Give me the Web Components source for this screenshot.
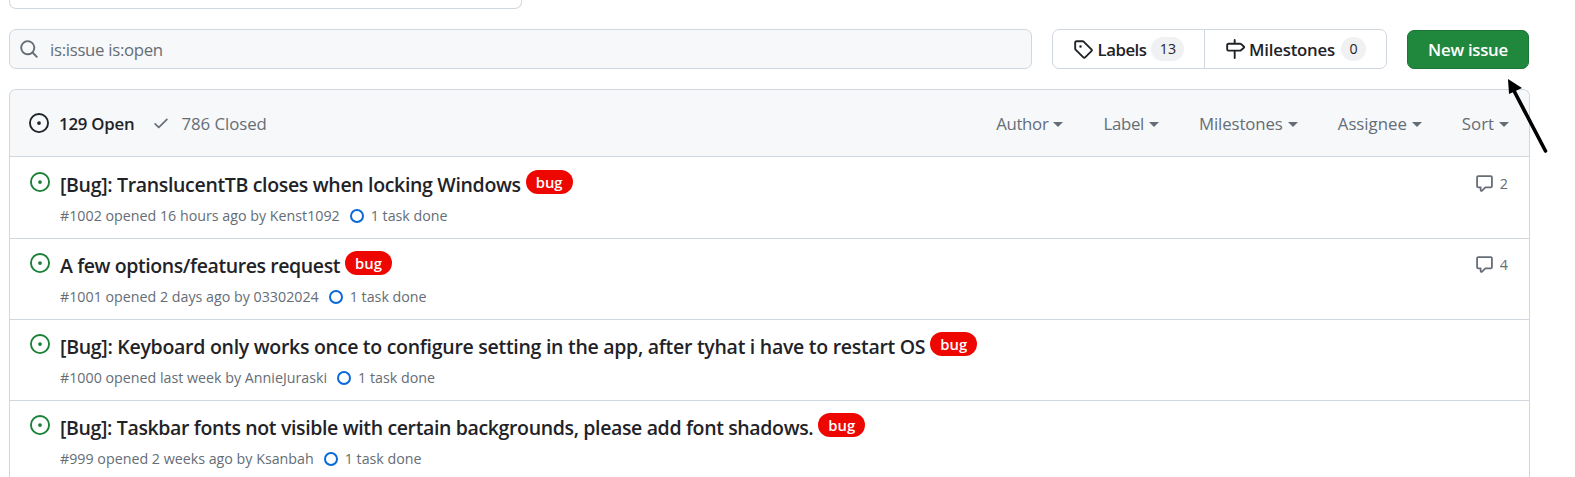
<!doctype html>
<html><head><meta charset="utf-8">
<style>
html,body{margin:0;padding:0;background:#fff;height:477px;overflow:hidden}
body{font-family:"Open Sans","Noto Sans",sans-serif;color:#1f2328}
</style></head>
<body>
<issues-page>
  <top-stub></top-stub>
  <issues-toolbar>
    <search-box>is:issue is:open</search-box>
    <nav-links></nav-links>
    <new-button>New issue</new-button>
  </issues-toolbar>
  <issues-panel>
    <panel-header></panel-header>
    <issue-row ls="-.33" title-text="[Bug]: TranslucentTB closes when locking Windows" meta="#1002 opened 16 hours ago by Kenst1092" comments="2"></issue-row>
    <issue-row ls="-.41" title-text="A few options/features request" meta="#1001 opened 2 days ago by 03302024" comments="4"></issue-row>
    <issue-row ls="-.28" title-text="[Bug]: Keyboard only works once to configure setting in the app, after tyhat i have to restart OS" meta="#1000 opened last week by AnnieJuraski"></issue-row>
    <issue-row ls="-.36" title-text="[Bug]: Taskbar fonts not visible with certain backgrounds, please add font shadows." meta="#999 opened 2 weeks ago by Ksanbah"></issue-row>
  </issues-panel>
  <arrow-mark></arrow-mark>
</issues-page>
<script>
function def(name, html){
  customElements.define(name, class extends HTMLElement{
    connectedCallback(){
      if(this.shadowRoot) return;
      const r=this.attachShadow({mode:'open'});
      r.innerHTML=typeof html==='function'?html(this):html;
    }
  });
}
const ICON={
 open:(s,c)=>`<svg width="${s}" height="${s}" viewBox="0 0 16 16" fill="${c}" style="display:block;flex:none"><path d="M8 9.5a1.5 1.5 0 1 0 0-3 1.5 1.5 0 0 0 0 3Z"/><path d="M8 0a8 8 0 1 1 0 16A8 8 0 0 1 8 0ZM1.5 8a6.5 6.5 0 1 0 13 0 6.5 6.5 0 0 0-13 0Z"/></svg>`,
 check:(s,c)=>`<svg width="${s}" height="${s}" viewBox="0 0 16 16" fill="${c}" style="display:block;flex:none"><path d="M13.78 4.22a.75.75 0 0 1 0 1.06l-7.25 7.25a.75.75 0 0 1-1.06 0L2.22 9.28a.751.751 0 0 1 1.06-1.06L6 10.94l6.72-6.72a.75.75 0 0 1 1.06 0Z"/></svg>`,
 search:(s,c)=>`<svg width="${s}" height="${s}" viewBox="0 0 16 16" fill="${c}" style="display:block;flex:none"><path d="M10.68 11.74a6 6 0 0 1-7.922-8.982 6 6 0 0 1 8.982 7.922l3.04 3.04a.749.749 0 1 1-1.06 1.06ZM11.5 7a4.499 4.499 0 1 0-8.997 0A4.499 4.499 0 0 0 11.5 7Z"/></svg>`,
 tag:(s,c)=>`<svg width="${s}" height="${s}" viewBox="0 0 16 16" fill="${c}" style="display:block;flex:none"><path d="M1 7.775V2.75C1 1.784 1.784 1 2.75 1h5.025c.464 0 .91.184 1.238.513l6.25 6.25a1.75 1.75 0 0 1 0 2.474l-5.026 5.026a1.75 1.75 0 0 1-2.474 0l-6.25-6.25A1.752 1.752 0 0 1 1 7.775Zm1.5 0c0 .066.026.13.073.177l6.25 6.25a.25.25 0 0 0 .354 0l5.025-5.025a.25.25 0 0 0 0-.354l-6.25-6.25a.25.25 0 0 0-.177-.073H2.75a.25.25 0 0 0-.25.25ZM6 5a1 1 0 1 1 0 2 1 1 0 0 1 0-2Z"/></svg>`,
 milestone:(s,c)=>`<svg width="${s}" height="${s}" viewBox="0 0 16 16" fill="${c}" style="display:block;flex:none"><path d="M7.75 0a.75.75 0 0 1 .75.75V3h3.634c.414 0 .814.147 1.13.414l2.07 1.75a1.75 1.75 0 0 1 0 2.672l-2.07 1.75a1.75 1.75 0 0 1-1.13.414H8.5v5.25a.75.75 0 0 1-1.5 0V10H2.75A1.75 1.75 0 0 1 1 8.25v-3.5C1 3.784 1.784 3 2.75 3H7V.75A.75.75 0 0 1 7.75 0Zm4.384 8.5a.25.25 0 0 0 .161-.06l2.07-1.75a.248.248 0 0 0 0-.38l-2.07-1.75a.25.25 0 0 0-.161-.06H2.75a.25.25 0 0 0-.25.25v3.5c0 .138.112.25.25.25h9.384Z"/></svg>`,
 comment:(s,c)=>`<svg width="${s}" height="${s}" viewBox="0 0 16 16" fill="${c}" style="display:block;flex:none"><path d="M1 2.75C1 1.784 1.784 1 2.75 1h10.5c.966 0 1.75.784 1.75 1.75v7.5A1.75 1.75 0 0 1 13.25 12H9.06l-2.573 2.573A1.458 1.458 0 0 1 4 13.543V12H2.75A1.75 1.75 0 0 1 1 10.25Zm1.75-.25a.25.25 0 0 0-.25.25v7.5c0 .138.112.25.25.25h2a.75.75 0 0 1 .75.75v2.19l2.72-2.72a.749.749 0 0 1 .53-.22h4.5a.25.25 0 0 0 .25-.25v-7.5a.25.25 0 0 0-.25-.25Z"/></svg>`
};
const BORDER='#d0d7de', MUTED='#656d76';

def('issues-page',`<style>:host{display:block;height:477px;position:relative;overflow:hidden}</style><slot></slot>`);
def('top-stub',`<style>:host{display:block;box-sizing:border-box;width:513px;height:9px;margin-left:9px;border:1px solid ${BORDER};border-top:0;border-radius:0 0 7px 7px}</style>`);
def('issues-toolbar',`<style>:host{display:flex;align-items:flex-start;height:40px;margin:20px 46px 0 9px}</style><slot></slot>`);
def('search-box',`<style>:host{display:flex;align-items:center;box-sizing:border-box;width:1023px;height:40px;background:#f6f8fa;border:1px solid ${BORDER};border-radius:7px;padding-left:9px;color:${MUTED};font-size:16.8px;letter-spacing:-.3px}
span{margin-left:11px}</style>${ICON.search(20,MUTED)}<span><slot></slot></span>`);
def('nav-links',`<style>:host{display:flex;box-sizing:border-box;width:335px;height:40px;margin-left:20px;border:1px solid ${BORDER};border-radius:7px;font-size:16.8px;font-weight:600}
a{display:flex;align-items:center;justify-content:center;color:#1f2328}
a.l{width:151px;border-right:1px solid ${BORDER};gap:5px;letter-spacing:-.5px}a.m{flex:1;gap:4px;letter-spacing:-.2px}
b{font-weight:400;font-size:14.2px;background:#eff1f3;border-radius:12px;height:24px;line-height:24px;text-align:center;letter-spacing:0}
.l b{width:33px}.m b{width:25px;margin-left:2px}</style>
<a class="l">${ICON.tag(20,'#1f2328')}<span>Labels</span><b>13</b></a><a class="m">${ICON.milestone(20,'#1f2328')}<span>Milestones</span><b>0</b></a>`);
def('new-button',`<style>:host{display:flex;align-items:center;justify-content:center;box-sizing:border-box;width:122px;height:39px;margin-top:1px;margin-left:20px;background:#1f883d;border:1px solid #1b7535;border-radius:7px;color:#fff;font-size:16.8px;font-weight:600;letter-spacing:-.27px}</style><slot></slot>`);
def('issues-panel',`<style>:host{display:block;box-sizing:border-box;width:1521px;margin:20px 0 0 9px;border:1px solid ${BORDER};border-bottom:0;border-radius:7px 7px 0 0}</style><slot></slot>`);
const dd=([t,ls])=>`<span class="d"><span style="letter-spacing:${ls}px">${t}</span><i></i></span>`;
def('panel-header',`<style>:host{display:flex;align-items:center;box-sizing:border-box;height:67px;margin-bottom:.67px;background:#f6f8fa;border-bottom:1px solid ${BORDER};border-radius:7px 7px 0 0;padding:0 20px 0 19px;font-size:16.8px;color:${MUTED}}
.o{display:flex;align-items:center;gap:10px;font-weight:600;color:#1f2328;letter-spacing:-.2px}
.c{display:flex;align-items:center;gap:12px;margin-left:17px;letter-spacing:-.05px}
.r{margin-left:auto;display:flex;gap:40px}
.d{display:flex;align-items:center}
i{display:block;width:0;height:0;margin-left:5px;margin-top:2px;border:5.5px solid transparent;border-bottom:0;border-top-color:${MUTED}}
</style><span class="o">${ICON.open(20,'#1f2328')}<span>129 Open</span></span><span class="c">${ICON.check(18,MUTED)}<span>786 Closed</span></span>
<span class="r">${[['Author',-.3],['Label',-.3],['Milestones',-.1],['Assignee',0],['Sort',0]].map(dd).join('')}</span>`);
def('issue-row',h=>{
 const t=h.getAttribute('title-text'),m=h.getAttribute('meta'),c=h.getAttribute('comments'),ls=h.getAttribute('ls');
 return `<style>:host{display:flex;box-sizing:border-box;height:81px;border-bottom:1px solid ${BORDER};padding:14.4px 21px 0 20px}
.b{margin-left:10px;flex:1}
.t{display:flex;align-items:flex-start;height:28px;font-size:19.5px;font-weight:600;color:#1f2328;letter-spacing:${ls}px;line-height:26px}
.bug{display:inline-block;background:#ee0701;color:#fff;font-size:14.8px;font-weight:600;line-height:24px;height:24px;padding:0 10px;border-radius:12px;margin-left:5px;margin-top:-2px;letter-spacing:0}
.m{display:flex;align-items:center;margin-top:6px;font-size:14.25px;color:${MUTED};line-height:20px}
.p{box-sizing:border-box;width:14px;height:14px;border:2.5px solid #0969da;border-radius:50%;margin:0 7px 0 10px}
.cm{display:flex;gap:6px;align-items:flex-start;margin-top:2px;font-size:14.3px;color:${MUTED};line-height:20px}</style>
<span class="i">${ICON.open(20,'#1a7f37')}</span>
<div class="b"><div class="t"><span>${t}</span><span class="bug">bug</span></div><div class="m"><span>${m}</span><span class="p"></span><span>1 task done</span></div></div>
${c?`<div class="cm">${ICON.comment(19,MUTED)}<span>${c}</span></div>`:''}`;
});
def('arrow-mark',`<style>:host{position:absolute;left:1495px;top:70px;width:70px;height:90px;display:block}</style>
<svg width="70" height="90" viewBox="0 0 70 90"><path d="M50.5 81 L17 17" stroke="#000" stroke-width="3.6" fill="none" stroke-linecap="round"/><path d="M13 9 L27 18 L14 24 Z" fill="#000"/></svg>`);
</script>
</body></html>
